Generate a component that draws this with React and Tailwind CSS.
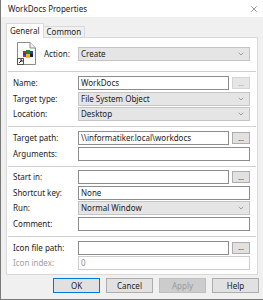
import { ChevronDown, X } from 'lucide-react';

const font = { fontFamily: '"Noto Sans", "Open Sans", sans-serif' };

function Field({ value = '', disabled = false }) {
  return (
    <div
      className={`flex h-[14px] flex-1 items-center border bg-white px-[2px] text-[8px] ${
        disabled ? 'border-[#cccccc] text-[#8a8a8a]' : 'border-[#8c8c8c] text-[#222]'
      }`}
    >
      {value}
    </div>
  );
}

function Dropdown({ value }) {
  return (
    <div className="flex h-[14px] flex-1 items-center justify-between border border-[#c4c4c4] bg-[#e5e5e5] pl-[2px] pr-[4px] text-[8px] text-[#222]">
      <span>{value}</span>
      <ChevronDown size={8} strokeWidth={1.5} className="text-[#555]" />
    </div>
  );
}

function Browse({ disabled = false }) {
  return (
    <div
      className={`ml-[3px] flex h-[12px] w-[18px] items-center justify-center border text-[7px] leading-none ${
        disabled ? 'border-[#d4d4d4] bg-[#e6e6e6] text-[#a0a0a0]' : 'border-[#adadad] bg-[#e1e1e1] text-[#333]'
      }`}
    >
      ...
    </div>
  );
}

function Row({ label, disabledLabel = false, children }) {
  return (
    <div className="flex h-[14px] items-center">
      <span className={`w-[71px] pl-[6px] text-[8px] ${disabledLabel ? 'text-[#a0a0a0]' : 'text-[#222]'}`}>
        {label}
      </span>
      <div className="flex flex-1 items-center">{children}</div>
    </div>
  );
}

function Separator() {
  return <div className="mx-[1px] h-px bg-[#d0d0d0]" />;
}

function ShortcutIcon() {
  return (
    <svg width="19" height="23" viewBox="0 0 19 23">
      <path d="M0.5 0.5 H13 L18.5 6 V22.5 H0.5 Z" fill="#fff" stroke="#8a8a8a" />
      <path d="M13 0.5 V6 H18.5" fill="#f0f0f0" stroke="#8a8a8a" />
      <rect x="6" y="9" width="3" height="2" fill="#d42020" />
      <rect x="6" y="11" width="3" height="2" fill="#2040d0" />
      <rect x="6" y="13" width="3" height="2" fill="#d42020" />
      <rect x="9" y="8" width="4" height="4" fill="#1a8a2a" />
      <rect x="9" y="12" width="4" height="4" fill="#e0c020" />
      <rect x="13" y="9" width="3" height="3" fill="#1f3fa0" />
      <rect x="13" y="12" width="3" height="3" fill="#1a1a5a" />
      <rect x="0.5" y="16.5" width="6" height="6" fill="#fff" stroke="#555" />
      <path d="M2 21 L5 18 M3 18 H5 V20" stroke="#222" strokeWidth="1" fill="none" />
    </svg>
  );
}

export default function App() {
  return (
    <div className="flex h-[300px] w-[263px] flex-col border-b border-l border-[#7a7a7a] bg-[#f0f0f0]" style={font}>
      <div className="flex h-[17px] items-center justify-between bg-white pl-[7px] pr-[4px]">
        <span className="text-[8px] text-[#222]">WorkDocs Properties</span>
        <X size={10} strokeWidth={1.2} className="text-[#333]" />
      </div>

      <div className="mt-[6px] flex items-end pl-[5px]">
        <div className="relative z-10 -mb-px flex h-[15px] items-center border border-b-0 border-[#d9d9d9] bg-white px-[3px] text-[8px] text-[#222]">
          General
        </div>
        <div className="flex h-[11px] items-center border border-b-0 border-l-0 border-[#d9d9d9] bg-[#f0f0f0] px-[3px] text-[8px] text-[#222]">
          Common
        </div>
      </div>

      <div className="mx-[5px] flex h-[238px] flex-col border border-[#d9d9d9] bg-white">
        <div className="flex items-center pl-[10px] pr-[7px] pt-[4px]">
          <ShortcutIcon />
          <span className="ml-[8px] w-[34px] text-[8px] text-[#222]">Action:</span>
          <Dropdown value="Create" />
        </div>

        <div className="mt-[6px]">
          <Separator />
        </div>

        <div className="flex flex-col gap-[1.5px] pr-[7px] pt-[4px]">
          <Row label="Name:">
            <Field value="WorkDocs" />
            <Browse disabled />
          </Row>
          <Row label="Target type:">
            <Dropdown value="File System Object" />
          </Row>
          <Row label="Location:">
            <Dropdown value="Desktop" />
          </Row>
        </div>

        <div className="mt-[5px]">
          <Separator />
        </div>

        <div className="flex flex-col gap-[2px] pr-[7px] pt-[4px]">
          <Row label="Target path:">
            <Field value="\\informatiker.local\workdocs" />
            <Browse />
          </Row>
          <Row label="Arguments:">
            <Field />
          </Row>
        </div>

        <div className="mt-[5px]">
          <Separator />
        </div>

        <div className="flex flex-col gap-[1.5px] pr-[7px] pt-[3px]">
          <Row label="Start in:">
            <Field />
            <Browse />
          </Row>
          <Row label="Shortcut key:">
            <Field value="None" />
          </Row>
          <Row label="Run:">
            <Dropdown value="Normal Window" />
          </Row>
          <Row label="Comment:">
            <Field />
          </Row>
        </div>

        <div className="mt-[5px]">
          <Separator />
        </div>

        <div className="flex flex-col gap-[1px] pr-[7px] pt-[4px]">
          <Row label="Icon file path:">
            <Field />
            <Browse />
          </Row>
          <Row label="Icon index:" disabledLabel>
            <Field value="0" disabled />
          </Row>
        </div>
      </div>

      <div className="mt-[3px] flex justify-end gap-[6px] pr-[4px]">
        <div className="flex h-[15px] w-[47px] items-center justify-center border border-[#0078d7] bg-[#e1e1e1] text-[8px] text-[#222]">
          OK
        </div>
        <div className="flex h-[15px] w-[47px] items-center justify-center border border-[#adadad] bg-[#e1e1e1] text-[8px] text-[#222]">
          Cancel
        </div>
        <div className="flex h-[15px] w-[47px] items-center justify-center border border-[#bfbfbf] bg-[#cccccc] text-[8px] text-[#9a9a9a]">
          Apply
        </div>
        <div className="flex h-[15px] w-[47px] items-center justify-center border border-[#adadad] bg-[#e1e1e1] text-[8px] text-[#222]">
          Help
        </div>
      </div>
    </div>
  );
}
